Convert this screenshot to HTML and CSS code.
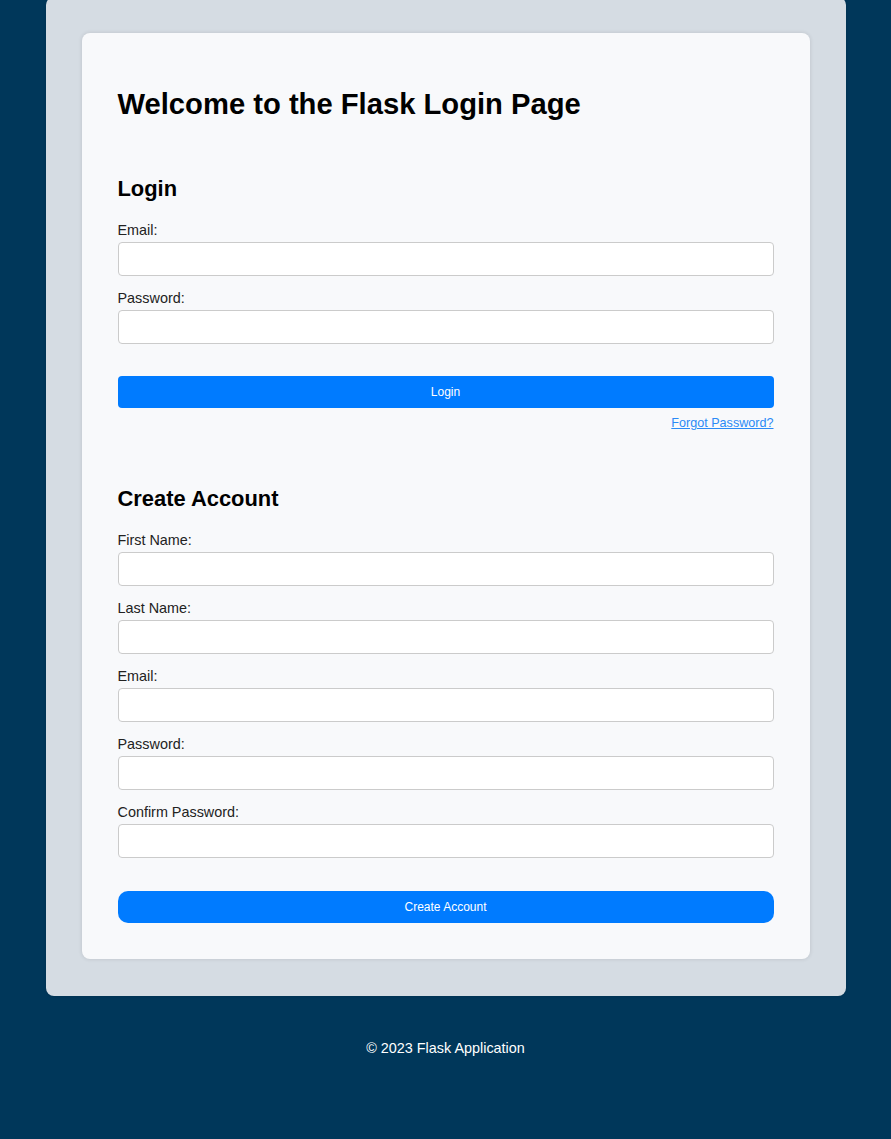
FILE: index.html
```html
<!DOCTYPE html>
<html lang="en">
<head>
<meta charset="utf-8">
<title>Flask Login Page</title>
<link rel="stylesheet" href="styles.css">
</head>
<body>
<div class="page-box">
  <main class="card">
    <h1 class="title">Welcome to the Flask Login Page</h1>

    <section class="section">
      <h2 class="section-title">Login</h2>
      <form class="form">
        <div class="field">
          <label class="label" for="login-email">Email:</label>
          <input class="input" id="login-email" type="email">
        </div>
        <div class="field">
          <label class="label" for="login-password">Password:</label>
          <input class="input" id="login-password" type="password">
        </div>
        <button class="btn btn-login" type="button">Login</button>
      </form>
      <div class="forgot"><a class="forgot-link" href="#">Forgot Password?</a></div>
    </section>

    <section class="section section-create">
      <h2 class="section-title">Create Account</h2>
      <form class="form">
        <div class="field">
          <label class="label" for="first-name">First Name:</label>
          <input class="input" id="first-name" type="text">
        </div>
        <div class="field">
          <label class="label" for="last-name">Last Name:</label>
          <input class="input" id="last-name" type="text">
        </div>
        <div class="field">
          <label class="label" for="new-email">Email:</label>
          <input class="input" id="new-email" type="email">
        </div>
        <div class="field">
          <label class="label" for="new-password">Password:</label>
          <input class="input" id="new-password" type="password">
        </div>
        <div class="field">
          <label class="label" for="confirm-password">Confirm Password:</label>
          <input class="input" id="confirm-password" type="password">
        </div>
        <button class="btn btn-create" type="button">Create Account</button>
      </form>
    </section>
  </main>
</div>
<footer class="footer">
  <p class="footer-text">&copy; 2023 Flask Application</p>
</footer>
</body>
</html>
```

FILE: styles.css
```css
* {
  box-sizing: border-box;
}

html, body {
  margin: 0;
  padding: 0;
}

body {
  background: #00375a;
  font-family: "Liberation Sans", Arial, sans-serif;
  color: #000;
  min-height: 1139px;
}

.page-box {
  width: 800px;
  margin: -3px auto 0;
  padding: 36px 36px 37px;
  background: #d5dce3;
  border-radius: 8px;
  box-shadow: 0 0 3px rgba(0, 0, 0, 0.15);
}

.card {
  background: #f8f9fb;
  border-radius: 8px;
  padding: 36px;
  box-shadow: 0 0 4px rgba(0, 0, 0, 0.12);
}

.title {
  margin: 19px 0 0;
  font-size: 29.2px;
  line-height: 33px;
  font-weight: bold;
  color: #000;
}

.section {
  margin-top: 55px;
}

.section-create {
  margin-top: 55.5px;
}

.section-title {
  margin: 0 0 21px;
  font-size: 21.9px;
  line-height: 25px;
  font-weight: bold;
  color: #000;
}

.form {
  margin: 0;
}

.field {
  margin-bottom: 14px;
}

.label {
  display: block;
  font-size: 14.4px;
  line-height: 16.5px;
  margin-bottom: 3.6px;
  color: #222;
}

.input {
  display: block;
  width: 100%;
  height: 34px;
  border: 1px solid #cbcbcb;
  border-radius: 4px;
  background: #fff;
  font-family: inherit;
  font-size: 14.4px;
  padding: 0 8px;
}

.btn {
  display: block;
  width: 100%;
  height: 32px;
  border: none;
  background: #007bff;
  color: #fff;
  font-family: "Liberation Sans", Arial, sans-serif;
  font-size: 12px;
  cursor: pointer;
}

.btn-login {
  margin-top: 31.5px;
  border-radius: 4px;
}

.btn-create {
  margin-top: 33px;
  border-radius: 10px;
}

.forgot {
  margin-top: 8px;
  text-align: right;
  font-size: 12.6px;
  line-height: 14.5px;
}

.forgot-link {
  color: #2a8af6;
  text-decoration: underline;
}

.footer {
  margin-top: 44px;
  text-align: center;
}

.footer-text {
  margin: 0;
  color: #fff;
  font-size: 14.4px;
  line-height: 16.5px;
}
```
